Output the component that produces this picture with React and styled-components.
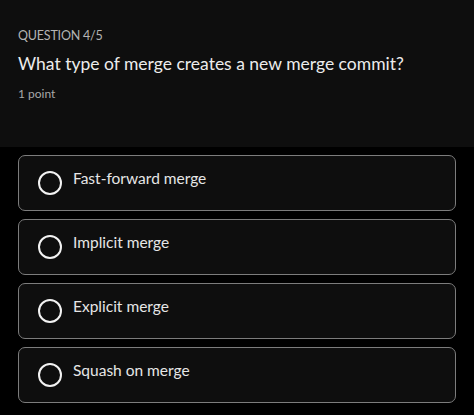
import React from 'react';
import styled, { createGlobalStyle } from 'styled-components';

const GlobalStyle = createGlobalStyle`
  html, body {
    margin: 0;
    padding: 0;
    background: #000;
  }
  body {
    font-family: Lato, "Noto Sans", sans-serif;
    -webkit-font-smoothing: antialiased;
  }
`;

const Page = styled.div`
  width: 474px;
  height: 415px;
  background: #000;
  display: flex;
  flex-direction: column;
  overflow: hidden;
`;

const Header = styled.header`
  height: 147px;
  box-sizing: border-box;
  padding: 28px 18px 0;
  background: #0e0e0e;
  display: flex;
  flex-direction: column;
`;

const Eyebrow = styled.div`
  font-size: 12.5px;
  line-height: 16px;
  color: #b4b4b4;
  letter-spacing: -0.2px;
`;

const Question = styled.h1`
  margin: 8px 0 0;
  font-size: 17.5px;
  font-weight: 400;
  line-height: 24px;
  color: #ececec;
  white-space: nowrap;
`;

const Points = styled.div`
  margin-top: 10px;
  font-size: 12px;
  line-height: 16px;
  color: #a8a8a8;
`;

const Options = styled.ul`
  list-style: none;
  margin: 0;
  padding: 8px 18px 0;
  display: flex;
  flex-direction: column;
  gap: 8px;
`;

const Option = styled.li`
  height: 56px;
  box-sizing: border-box;
  border: 1px solid #7c7c7c;
  border-radius: 7px;
  background: #0e0e0e;
  display: flex;
  align-items: center;
  padding: 0 0 0 19px;
  gap: 11px;
  cursor: pointer;
`;

const Radio = styled.span`
  width: 24px;
  height: 24px;
  box-sizing: border-box;
  border: 2px solid #f2f2f2;
  border-radius: 50%;
  flex-shrink: 0;
`;

const Label = styled.span`
  font-size: 15.5px;
  color: #e6e6e6;
  margin-bottom: 10px;
`;

const choices = ['Fast-forward merge', 'Implicit merge', 'Explicit merge', 'Squash on merge'];

export default function App() {
  return (
    <Page>
      <GlobalStyle />
      <Header>
        <Eyebrow>QUESTION 4/5</Eyebrow>
        <Question>What type of merge creates a new merge commit?</Question>
        <Points>1 point</Points>
      </Header>
      <Options>
        {choices.map((c) => (
          <Option key={c}>
            <Radio />
            <Label>{c}</Label>
          </Option>
        ))}
      </Options>
    </Page>
  );
}
